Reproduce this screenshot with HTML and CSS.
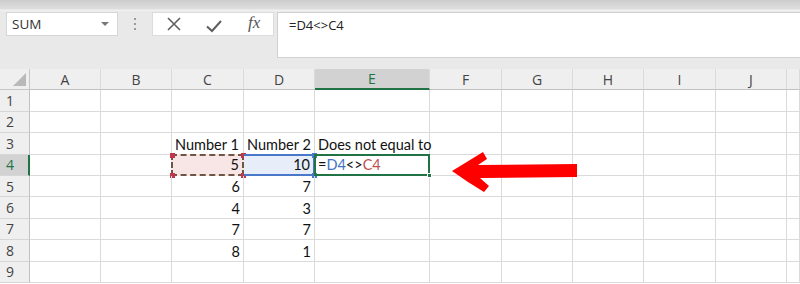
FILE: index.html
```html
<!DOCTYPE html>
<html lang="en">
<head>
    <meta charset="UTF-8">
    <title>Does not equal to</title>
    <link rel="stylesheet" href="styles.css">
</head>
<body>
    <div class="toolbar">
        <div class="namebox">
            <span>SUM</span>
            <span class="caret"></span>
        </div>
        <div class="grip"><i></i><i></i><i></i></div>
        <div class="buttons">
            <svg class="icon" width="16" height="16" viewBox="0 0 16 16">
                <path d="M2 2 L14 14 M14 2 L2 14" stroke="#5f5f5f" stroke-width="1.6" fill="none"/>
            </svg>
            <svg class="icon check" width="18" height="16" viewBox="0 0 18 16">
                <path d="M2 8.5 L7 13 L16 3" stroke="#5f5f5f" stroke-width="2" fill="none"/>
            </svg>
            <span class="fx">fx</span>
        </div>
        <div class="formula">=D4&lt;&gt;C4</div>
    </div>

    <div class="sheet" id="sheet"></div>

    <svg class="arrow" width="140" height="50" viewBox="446 148 140 50">
        <path d="M452 171 L470 160 L483 152 L487 159 L478 165 L577 164 L577 177 L480 178 L489 186 L484 192 L468 182 Z" fill="#ff0000"/>
    </svg>

    <script>
        const cols = ['', 'A', 'B', 'C', 'D', 'E', 'F', 'G', 'H', 'I', 'J', ''];
        const data = {
            'C3': 'Number 1', 'D3': 'Number 2', 'E3': 'Does not equal to',
            'C4': 5, 'D4': 10,
            'C5': 6, 'D5': 7,
            'C6': 4, 'D6': 3,
            'C7': 7, 'D7': 7,
            'C8': 8, 'D8': 1
        };
        const sheet = document.getElementById('sheet');

        cols.forEach((c, i) => {
            const h = document.createElement('div');
            h.className = i === 0 ? 'corner' : 'colhead';
            if (c === 'E') h.classList.add('active');
            if (i === 0) h.innerHTML = '<span class="tri"></span>';
            else h.textContent = c;
            sheet.appendChild(h);
        });

        for (let r = 1; r <= 9; r++) {
            const rh = document.createElement('div');
            rh.className = 'rowhead' + (r === 4 ? ' active' : '');
            rh.textContent = r;
            sheet.appendChild(rh);
            cols.slice(1).forEach(c => {
                const cell = document.createElement('div');
                cell.className = 'cell';
                const key = c + r;
                const v = data[key];
                if (typeof v === 'number') {
                    cell.classList.add('num');
                    cell.textContent = v;
                } else if (v) {
                    cell.textContent = v;
                }
                if (key === 'C4') cell.classList.add('ref-c');
                if (key === 'D4') cell.classList.add('ref-d');
                if (key === 'E4') {
                    cell.classList.add('editing');
                    cell.innerHTML = '=<span class="blue">D4</span>&lt;&gt;<span class="red">C4</span><b class="handle"></b>';
                }
                sheet.appendChild(cell);
            });
        }
    </script>
</body>
</html>
```

FILE: styles.css
```css
* {
    margin: 0;
    padding: 0;
    box-sizing: border-box;
}

body {
    width: 800px;
    height: 284px;
    overflow: hidden;
    position: relative;
    background-color: #ffffff;
    font-family: 'Open Sans', sans-serif;
    color: #222;
}

.toolbar {
    height: 70px;
    background: linear-gradient(#cdcdcd 0px, #dedede 9px, #f2f2f2 10px, #e9e9e9 12px, #e9e9e9 100%);
    display: flex;
    align-items: flex-start;
    padding: 12px 0 0 6px;
    border-bottom: 1px solid #dadada;
}

.namebox {
    width: 112px;
    height: 24px;
    background-color: #ffffff;
    border: 1px solid #d6d6d6;
    display: flex;
    align-items: center;
    justify-content: space-between;
    padding: 0 8px 0 5px;
    font-size: 13.5px;
    color: #333;
}

.caret {
    width: 0;
    height: 0;
    border-left: 4px solid transparent;
    border-right: 4px solid transparent;
    border-top: 4px solid #777;
}

.grip {
    width: 34px;
    height: 24px;
    display: flex;
    flex-direction: column;
    align-items: center;
    justify-content: center;
    gap: 3px;
}

.grip i {
    width: 2px;
    height: 2px;
    background-color: #9a9a9a;
}

.buttons {
    width: 122px;
    height: 24px;
    background-color: #ffffff;
    border: 1px solid #dcdcdc;
    display: flex;
    align-items: center;
    padding-left: 13px;
    gap: 23px;
}

.check {
    margin-top: 3px;
}

.fx {
    font-family: 'Liberation Serif', serif;
    font-style: italic;
    font-size: 17px;
    color: #555;
    margin-left: 2px;
    margin-top: -3px;
}

.formula {
    flex: 1;
    height: 46px;
    margin-left: 3px;
    background-color: #ffffff;
    border-top: 1px solid #cfcfcf;
    border-left: 1px solid #cfcfcf;
    border-bottom: 1px solid #d2d2d2;
    padding: 3px 0 0 11px;
    font-size: 13px;
    color: #222;
}

.sheet {
    display: grid;
    grid-template-columns: 30px 71px 71px 72px 71px 115px 72px 71px 71px 72px 71px 13px;
    grid-template-rows: repeat(10, 21.4px);
    margin-top: -1px;
}

.corner,
.colhead,
.rowhead {
    background-color: #efefef;
    color: #444;
    font-size: 14px;
}

.corner {
    border-right: 1px solid #c6c6c6;
    border-bottom: 1px solid #c6c6c6;
    position: relative;
}

.tri {
    position: absolute;
    right: 3px;
    bottom: 3px;
    width: 0;
    height: 0;
    border-left: 13px solid transparent;
    border-bottom: 13px solid #b9b9b9;
}

.colhead {
    display: flex;
    justify-content: center;
    align-items: center;
    border-right: 1px solid #dadada;
    border-bottom: 1px solid #c0c0c0;
}

.colhead.active {
    background-color: #d2d2d2;
    color: #217346;
    border-bottom: 2px solid #217346;
}

.rowhead {
    display: flex;
    align-items: center;
    padding-left: 6px;
    border-right: 1px solid #c0c0c0;
    border-bottom: 1px solid #d6d6d6;
}

.rowhead.active {
    background-color: #d2d2d2;
    color: #217346;
    border-right: 2px solid #217346;
}

.cell {
    border-right: 1px solid #dadada;
    border-bottom: 1px solid #dadada;
    font-family: 'Lato', sans-serif;
    font-size: 14.5px;
    color: #111;
    display: flex;
    align-items: flex-end;
    padding: 0 0 1px 3px;
    white-space: nowrap;
    position: relative;
}

.cell.num {
    justify-content: flex-end;
    padding-right: 3px;
}

.ref-c {
    background-color: #f8e6e6;
    border: 2px dashed #6e5644;
    margin: -1px 0 0 -1px;
    padding-right: 4px;
}

.ref-c::before,
.ref-c::after,
.ref-d::after {
    content: '';
    position: absolute;
    width: 5px;
    height: 5px;
}

.ref-c::before {
    left: -3px;
    top: -3px;
    background-color: #c3374d;
    box-shadow: 0 20px 0 #c3374d, 71px 0 0 #c3374d, 71px 20px 0 #c3374d;
}

.ref-d {
    background-color: #e7eef9;
    border-top: 2px solid #4a78c8;
    border-bottom: 2px solid #4a78c8;
    border-right: 2px solid #4a78c8;
    margin-top: -1px;
    padding-right: 2px;
}

.ref-d::after {
    right: -4px;
    top: -3px;
    background-color: #4a78c8;
    box-shadow: 0 20px 0 #4a78c8;
}

.editing {
    border: 2px solid #217346;
    margin: -1px 0 0 -1px;
    padding-left: 2px;
    z-index: 1;
}

.handle {
    position: absolute;
    right: -4px;
    bottom: -4px;
    width: 5px;
    height: 5px;
    background-color: #217346;
    border: 1px solid #ffffff;
}

.blue {
    color: #4472c4;
}

.red {
    color: #c0504d;
}

.arrow {
    position: absolute;
    left: 446px;
    top: 148px;
}
```
